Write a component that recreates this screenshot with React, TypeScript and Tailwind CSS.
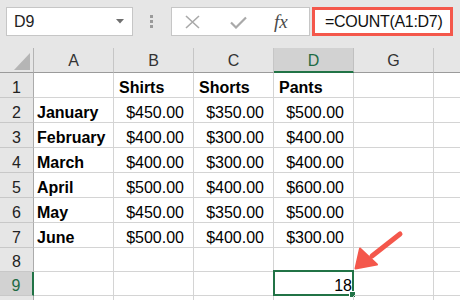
import React from 'react';

type Cell = { t?: string; b?: boolean; num?: boolean };

const colHeads = ['A', 'B', 'C', 'D', 'G', ''];

const data: { n: number; h: string; cells: Cell[] }[] = [
  { n: 1, h: 'h-[25px]', cells: [{}, { t: 'Shirts', b: true }, { t: 'Shorts', b: true }, { t: 'Pants', b: true }, {}, {}] },
  { n: 2, h: 'h-[25px]', cells: [{ t: 'January', b: true }, { t: '$450.00', num: true }, { t: '$350.00', num: true }, { t: '$500.00', num: true }, {}, {}] },
  { n: 3, h: 'h-[25px]', cells: [{ t: 'February', b: true }, { t: '$400.00', num: true }, { t: '$300.00', num: true }, { t: '$400.00', num: true }, {}, {}] },
  { n: 4, h: 'h-[25px]', cells: [{ t: 'March', b: true }, { t: '$400.00', num: true }, { t: '$300.00', num: true }, { t: '$400.00', num: true }, {}, {}] },
  { n: 5, h: 'h-[25px]', cells: [{ t: 'April', b: true }, { t: '$500.00', num: true }, { t: '$400.00', num: true }, { t: '$600.00', num: true }, {}, {}] },
  { n: 6, h: 'h-[25px]', cells: [{ t: 'May', b: true }, { t: '$450.00', num: true }, { t: '$350.00', num: true }, { t: '$500.00', num: true }, {}, {}] },
  { n: 7, h: 'h-[25px]', cells: [{ t: 'June', b: true }, { t: '$500.00', num: true }, { t: '$400.00', num: true }, { t: '$300.00', num: true }, {}, {}] },
  { n: 8, h: 'h-[24px]', cells: [{}, {}, {}, {}, {}, {}] },
  { n: 9, h: 'h-[24px]', cells: [{}, {}, {}, {}, {}, {}] },
  // row 10 only peeks in at the bottom edge, its number is out of view
  { n: 10, h: 'h-[25px]', cells: [{}, {}, {}, {}, {}, {}] },
];

const Toolbar = () => (
  <div className="flex h-[48px] items-start bg-[#e6e6e6] pt-[7px]">
    {/* name box */}
    <div className="ml-[6px] flex h-[29px] w-[127px] items-center justify-between border border-[#c6c6c6] bg-white pl-[7px] pr-[8px]">
      <span className="text-[16px] leading-none text-[#222]">D9</span>
      <svg width="8" height="5" viewBox="0 0 8 5">
        <path d="M0 0 L8 0 L4 4.5 Z" fill="#6f6f6f" />
      </svg>
    </div>
    <div className="ml-[17px] mt-[8px] flex flex-col gap-[2px]">
      <span className="h-[3px] w-[3px] bg-[#9a9a9a]" />
      <span className="h-[3px] w-[3px] bg-[#9a9a9a]" />
      <span className="h-[3px] w-[3px] bg-[#9a9a9a]" />
    </div>
    {/* cancel / enter / fx */}
    <div className="ml-[18px] flex h-[29px] w-[139px] items-center border border-[#c6c6c6] bg-white">
      <svg className="ml-[13px]" width="15" height="14" viewBox="0 0 15 14">
        <path d="M1 1 L14 13 M14 1 L1 13" stroke="#a9a9a9" strokeWidth="1.6" fill="none" />
      </svg>
      <svg className="ml-[30px] mt-[1px]" width="17" height="13" viewBox="0 0 17 13">
        <path d="M1 6.5 L6 11.5 L16 1.5" stroke="#a9a9a9" strokeWidth="2.2" fill="none" />
      </svg>
      <span className="ml-[27px] font-['Liberation_Serif',serif] text-[19px] italic leading-none text-[#4a4a4a]">fx</span>
    </div>
    {/* formula box */}
    <div className="ml-[2px] flex h-[29px] w-[141px] items-center border-[3px] border-[#f4574b] bg-white pl-[10px]">
      <span className="text-[16px] leading-none tracking-[-0.3px] text-[#111]">=COUNT(A1:D7)</span>
    </div>
  </div>
);

const Sheet = () => (
  <div className="grid grid-cols-[34px_80px_80px_80px_80px_80px_80px]">
    {/* header row */}
    <div className="relative h-[25px] border-r border-b border-r-[#b4b4b4] border-b-[#9b9b9b] bg-[#e6e6e6]">
      <svg className="absolute left-[14px] top-[5px]" width="17" height="17" viewBox="0 0 17 17">
        <path d="M16 0 L16 17 L0 17 Z" fill="#b5b5b5" />
      </svg>
    </div>
    {colHeads.map((c, i) => (
      <div
        key={c + i}
        className={
          c === 'D'
            ? 'flex h-[25px] items-end justify-center border-r border-b-2 border-r-[#c0c0c0] border-b-[#217346] bg-[#d2d2d2] pb-[1px] text-[16px] leading-[18px] text-[#1e6b44]'
            : 'flex h-[25px] items-end justify-center border-r border-b border-r-[#c6c6c6] border-b-[#9b9b9b] bg-[#e6e6e6] pb-[2px] text-[16px] leading-[18px] text-[#333]'
        }
      >
        {c}
      </div>
    ))}

    {data.map((r) => (
      <React.Fragment key={r.n}>
        <div
          className={
            r.n === 9
              ? `flex ${r.h} items-end justify-center border-r-2 border-b border-r-[#217346] border-b-[#c8c8c8] bg-[#d2d2d2] text-[16px] leading-[18px] text-[#1e6b44]`
              : `flex ${r.h} items-end justify-center border-r border-b border-r-[#ababab] border-b-[#c8c8c8] bg-[#e6e6e6] text-[16px] leading-[18px] text-[#222]`
          }
        >
          {r.n < 10 ? r.n : ''}
        </div>
        {r.cells.map((c, j) => {
          const selected = r.n === 9 && j === 3;
          return (
            <div
              key={j}
              className={`relative flex ${r.h} items-end border-r border-b border-[#d4d4d4] text-[16px] leading-[18px] ${
                c.num ? 'justify-end pr-[9px]' : j === 0 ? 'pl-[3px]' : 'pl-[5px]'
              } ${c.b ? 'font-bold' : ''}`}
            >
              {c.t}
              {selected && (
                <>
                  <span className="ml-auto pr-[1px]">18</span>
                  <div className="absolute -top-[2px] -left-[1px] -right-[1px] -bottom-[1px] border-2 border-[#217346]">
                    <div className="absolute -right-[4px] -bottom-[4px] h-[7px] w-[7px] border border-white bg-[#217346]" />
                  </div>
                </>
              )}
            </div>
          );
        })}
      </React.Fragment>
    ))}
  </div>
);

const Arrow = () => (
  <svg className="pointer-events-none absolute left-0 top-0" width="460" height="300" viewBox="0 0 460 300">
    <line x1="400" y1="234" x2="372" y2="256" stroke="#f4574b" strokeWidth="5" strokeLinecap="round" />
    <path d="M355.5 268.5 L360 248.5 L377 264.5 Z" fill="#f4574b" stroke="#f4574b" strokeWidth="2" strokeLinejoin="round" />
  </svg>
);

export default function App() {
  return (
    <div className="relative h-[300px] w-[460px] overflow-hidden bg-white font-['Liberation_Sans',Arial,sans-serif] text-black">
      <Toolbar />
      <Sheet />
      <Arrow />
    </div>
  );
}
